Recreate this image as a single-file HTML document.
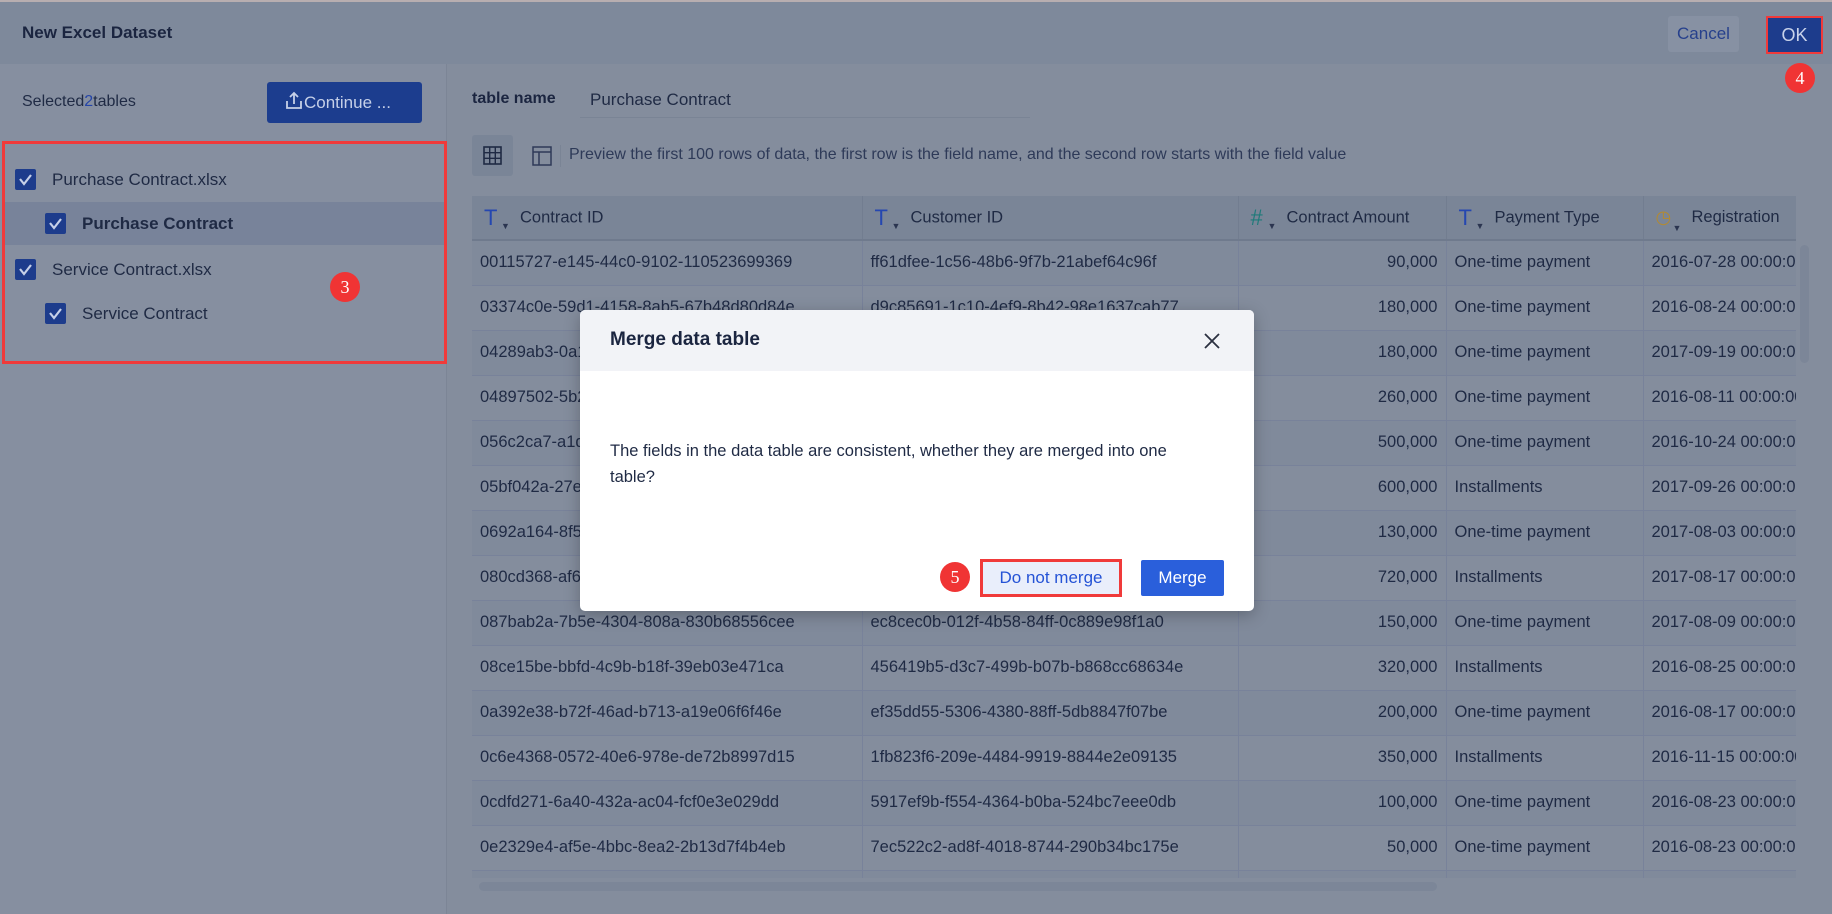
<!DOCTYPE html>
<html><head><meta charset="utf-8"><style>
*{box-sizing:border-box;margin:0;padding:0}
body{width:1832px;height:914px;overflow:hidden;background:#848d9d;font-family:"Liberation Sans",Arial,sans-serif;color:#1f2a44;position:relative}
.abs{position:absolute}
.topline{left:0;top:0;width:1832px;height:2px;background:#b8aeb0}
.header{left:0;top:2px;width:1832px;height:62px;background:#7e899b}
.title{left:22px;top:23px;font-size:17px;font-weight:bold;color:#1b2540}
.cancel{left:1668px;top:16px;width:71px;height:36px;background:#8791a3;border-radius:3px;color:#26408c;font-size:17px;text-align:center;line-height:36px}
.ok{left:1766px;top:16px;width:57px;height:38px;border:2px solid #f03a3a;background:#1d3c8c;color:#c8d2ea;font-size:18px;text-align:center;line-height:34px}
.badge{width:30px;height:30px;border-radius:50%;background:#f03434;color:#fff;font-size:18px;text-align:center;line-height:30px;font-family:"Liberation Serif",serif}
.left{left:0;top:64px;width:447px;height:850px;background:#868fa0;border-right:1px solid #7c8596}
.sel{left:22px;top:93px;font-size:16px;color:#1f2a44}
.sel span{color:#2545a8}
.cont{left:267px;top:82px;width:155px;height:41px;background:#1c3d8e;border-radius:3px;color:#c6d0e8;font-size:17px;line-height:41px;padding-left:17px}
.redbox{left:2px;top:141px;width:445px;height:223px;border:3px solid #f03a3a}
.hl{left:4px;top:202px;width:440px;height:43px;background:#78839a}
.cb{width:21px;height:21px;background:#1d3c8c;border-radius:2px}
.cb svg{display:block}
.lt{font-size:17px;color:#1f2a44}
.tn{left:472px;top:90px;font-size:16px;font-weight:bold;color:#1b2540}
.tv{left:590px;top:90px;font-size:17px;color:#1f2a44}
.uline{left:580px;top:117px;width:450px;height:1px;background:#7a8495}
.gridbtn{left:472px;top:135px;width:41px;height:41px;background:#7a8597;border-radius:3px}
.prev{left:569px;top:146px;font-size:16px;color:#2e3a58}
.tw{left:472px;top:196px;width:1324px;height:682px;overflow:hidden}
table{border-collapse:collapse;table-layout:fixed;width:1324px;font-size:16.5px}
th{height:44px;background:#7a8597;font-weight:normal;text-align:left;border-right:1px solid #727d90;border-bottom:2px solid #6f7a8d;padding-left:12px;color:#1f2a44;white-space:nowrap;overflow:hidden}
td{height:45px;border-bottom:1px solid #78829a;border-right:1px solid #78829a;padding:0 8px;white-space:nowrap;overflow:hidden;color:#1f2a44}
tr:nth-child(even) td{background:#808a9b}
td.r{text-align:right}
.ic{display:inline-block;width:36px;font-size:22px;color:#2547b0;position:relative;vertical-align:middle}
.ic i{position:absolute;left:17px;top:16px;font-style:normal;font-size:9px;color:#2b3550}
.hs{left:479px;top:882px;width:958px;height:9px;border-radius:5px;background:#7c8698}
.vs{left:1800px;top:245px;width:9px;height:118px;border-radius:5px;background:#7c8698}
.modal{left:580px;top:310px;width:674px;height:301px;background:#fff;border-radius:5px;box-shadow:0 4px 16px rgba(0,0,0,.25);overflow:hidden}
.mh{left:0;top:0;width:674px;height:61px;background:#f2f3f7}
.btn1{left:980px;top:559px;width:142px;height:38px;border:3px solid #f03a3a;background:#e9eefb;color:#2553d6;font-size:17px;text-align:center;line-height:32px}
.btn2{left:1141px;top:560px;width:83px;height:36px;background:#2a5fdb;color:#fff;font-size:17px;text-align:center;line-height:36px;border-radius:2px}
</style></head><body>
<div class="abs topline"></div>
<div class="abs header"></div>
<div class="abs title">New Excel Dataset</div>
<div class="abs cancel">Cancel</div>
<div class="abs ok">OK</div>
<div class="abs badge" style="left:1785px;top:63px">4</div>

<div class="abs left"></div>
<div class="abs sel">Selected<span>2</span>tables</div>
<div class="abs cont"><svg width="20" height="20" viewBox="0 0 20 20" style="vertical-align:-3px"><path d="M10 2v11M6 6l4-4 4 4M3 10v7h14v-7" fill="none" stroke="#c6d0e8" stroke-width="1.8"/></svg>Continue ...</div>
<div class="abs hl"></div>
<div class="abs redbox"></div>
<div class="abs cb" style="left:15px;top:169px"><svg width="21" height="21"><path d="M5 10l4 5 7-9" fill="none" stroke="#c6d0e8" stroke-width="2.2"/></svg></div>
<div class="abs lt" style="left:52px;top:170px">Purchase Contract.xlsx</div>
<div class="abs cb" style="left:45px;top:213px"><svg width="21" height="21"><path d="M5 10l4 5 7-9" fill="none" stroke="#c6d0e8" stroke-width="2.2"/></svg></div>
<div class="abs lt" style="left:82px;top:214px;font-weight:bold">Purchase Contract</div>
<div class="abs cb" style="left:15px;top:259px"><svg width="21" height="21"><path d="M5 10l4 5 7-9" fill="none" stroke="#c6d0e8" stroke-width="2.2"/></svg></div>
<div class="abs lt" style="left:52px;top:260px">Service Contract.xlsx</div>
<div class="abs cb" style="left:45px;top:303px"><svg width="21" height="21"><path d="M5 10l4 5 7-9" fill="none" stroke="#c6d0e8" stroke-width="2.2"/></svg></div>
<div class="abs lt" style="left:82px;top:304px">Service Contract</div>
<div class="abs badge" style="left:330px;top:272px">3</div>

<div class="abs tn">table name</div>
<div class="abs tv">Purchase Contract</div>
<div class="abs uline"></div>
<div class="abs gridbtn"><svg width="41" height="41"><rect x="12" y="12" width="17" height="17" fill="none" stroke="#1f2a44" stroke-width="1.6"/><path d="M17.7 12v17M23.3 12v17M12 17.7h17M12 23.3h17" stroke="#1f2a44" stroke-width="1.4"/></svg></div>
<svg class="abs" style="left:531px;top:145px" width="22" height="22"><rect x="2" y="2" width="18" height="18" fill="none" stroke="#2e3a58" stroke-width="1.5"/><path d="M2 7h18M8 7v13" stroke="#2e3a58" stroke-width="1.5"/></svg>
<div class="abs" style="left:560px;top:145px;width:1px;height:22px;background:#7a8495"></div>
<div class="abs prev">Preview the first 100 rows of data, the first row is the field name, and the second row starts with the field value</div>

<div class="abs tw"><table>
<colgroup><col style="width:390px"><col style="width:376px"><col style="width:208px"><col style="width:197px"><col style="width:153px"></colgroup>
<tr><th><span class="ic">T<i>▼</i></span>Contract ID</th><th><span class="ic">T<i>▼</i></span>Customer ID</th><th><span class="ic" style="color:#1f7a7a">#<i>▼</i></span>Contract Amount</th><th><span class="ic">T<i>▼</i></span>Payment Type</th><th><span class="ic" style="color:#b58a2e;font-size:18px">◷<i>▼</i></span>Registration</th></tr>
<tr><td>00115727-e145-44c0-9102-110523699369</td><td>ff61dfee-1c56-48b6-9f7b-21abef64c96f</td><td class="r">90,000</td><td>One-time payment</td><td>2016-07-28 00:00:00</td></tr>
<tr><td>03374c0e-59d1-4158-8ab5-67b48d80d84e</td><td>d9c85691-1c10-4ef9-8b42-98e1637cab77</td><td class="r">180,000</td><td>One-time payment</td><td>2016-08-24 00:00:00</td></tr>
<tr><td>04289ab3-0a1c-4d2e-9b3f-1c2d3e4f5a6b</td><td>a1b2c3d4-1e2f-4a5b-8c9d-0e1f2a3b4c5d</td><td class="r">180,000</td><td>One-time payment</td><td>2017-09-19 00:00:00</td></tr>
<tr><td>04897502-5b2c-4e3d-8f4a-2b3c4d5e6f7a</td><td>b2c3d4e5-2f3a-4b5c-9d0e-1f2a3b4c5d6e</td><td class="r">260,000</td><td>One-time payment</td><td>2016-08-11 00:00:00</td></tr>
<tr><td>056c2ca7-a1d3-4f4e-9a5b-3c4d5e6f7a8b</td><td>c3d4e5f6-3a4b-4c5d-8e1f-2a3b4c5d6e7f</td><td class="r">500,000</td><td>One-time payment</td><td>2016-10-24 00:00:00</td></tr>
<tr><td>05bf042a-27e4-4a5f-8b6c-4d5e6f7a8b9c</td><td>d4e5f6a7-4b5c-4d6e-9f2a-3b4c5d6e7f8a</td><td class="r">600,000</td><td>Installments</td><td>2017-09-26 00:00:00</td></tr>
<tr><td>0692a164-8f5a-4b6a-9c7d-5e6f7a8b9c0d</td><td>e5f6a7b8-5c6d-4e7f-8a3b-4c5d6e7f8a9b</td><td class="r">130,000</td><td>One-time payment</td><td>2017-08-03 00:00:00</td></tr>
<tr><td>080cd368-af6b-4c7b-8d8e-6f7a8b9c0d1e</td><td>f6a7b8c9-6d7e-4f8a-9b4c-5d6e7f8a9b0c</td><td class="r">720,000</td><td>Installments</td><td>2017-08-17 00:00:00</td></tr>
<tr><td>087bab2a-7b5e-4304-808a-830b68556cee</td><td>ec8cec0b-012f-4b58-84ff-0c889e98f1a0</td><td class="r">150,000</td><td>One-time payment</td><td>2017-08-09 00:00:00</td></tr>
<tr><td>08ce15be-bbfd-4c9b-b18f-39eb03e471ca</td><td>456419b5-d3c7-499b-b07b-b868cc68634e</td><td class="r">320,000</td><td>Installments</td><td>2016-08-25 00:00:00</td></tr>
<tr><td>0a392e38-b72f-46ad-b713-a19e06f6f46e</td><td>ef35dd55-5306-4380-88ff-5db8847f07be</td><td class="r">200,000</td><td>One-time payment</td><td>2016-08-17 00:00:00</td></tr>
<tr><td>0c6e4368-0572-40e6-978e-de72b8997d15</td><td>1fb823f6-209e-4484-9919-8844e2e09135</td><td class="r">350,000</td><td>Installments</td><td>2016-11-15 00:00:00</td></tr>
<tr><td>0cdfd271-6a40-432a-ac04-fcf0e3e029dd</td><td>5917ef9b-f554-4364-b0ba-524bc7eee0db</td><td class="r">100,000</td><td>One-time payment</td><td>2016-08-23 00:00:00</td></tr>
<tr><td>0e2329e4-af5e-4bbc-8ea2-2b13d7f4b4eb</td><td>7ec522c2-ad8f-4018-8744-290b34bc175e</td><td class="r">50,000</td><td>One-time payment</td><td>2016-08-23 00:00:00</td></tr>
<tr><td></td><td></td><td></td><td></td><td></td></tr>
</table></div>
<div class="abs hs"></div>
<div class="abs vs"></div>

<div class="abs modal">
<div class="abs mh"></div>
<div class="abs" style="left:30px;top:19px;font-size:19px;font-weight:bold;color:#1b2540">Merge data table</div>
<svg class="abs" style="left:623px;top:22px" width="18" height="18"><path d="M2 2l14 14M16 2L2 16" stroke="#2b3040" stroke-width="1.8"/></svg>
<div class="abs" style="left:30px;top:128px;width:600px;font-size:16.5px;line-height:26px;color:#1f2a44">The fields in the data table are consistent, whether they are merged into one table?</div>
</div>
<div class="abs btn1">Do not merge</div>
<div class="abs btn2">Merge</div>
<div class="abs badge" style="left:940px;top:562px">5</div>
</body></html>
